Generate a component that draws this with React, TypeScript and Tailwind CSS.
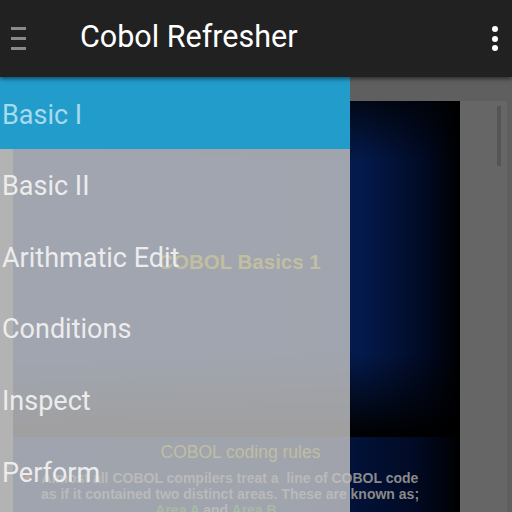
import React from "react";

const items = ["Basic I", "Basic II", "Arithmatic Edit", "Conditions", "Inspect", "Perform"];

export default function App() {
  return (
    <div className="w-[512px] h-[512px] flex flex-col overflow-hidden bg-[#666666]" style={{ fontFamily: "Roboto, 'Noto Sans', sans-serif" }}>
      {/* App bar */}
      <div className="h-[77px] shrink-0 bg-[#212121] flex items-center relative z-20 shadow-[0_2px_4px_rgba(0,0,0,0.5)]">
        <div className="w-[80px] pl-[11px] flex flex-col gap-[7px] self-center">
          <div className="w-[15px] h-[3px] bg-[#8a8a8a]" />
          <div className="w-[15px] h-[3px] bg-[#8a8a8a]" />
          <div className="w-[15px] h-[3px] bg-[#8a8a8a]" />
        </div>
        <div className="text-white text-[30.5px] leading-none flex-1 -mt-[2px]">Cobol Refresher</div>
        <div className="w-[36px] flex flex-col items-center gap-[3.5px] pl-[1px]">
          <div className="w-[6px] h-[6px] rounded-full bg-white" />
          <div className="w-[6px] h-[6px] rounded-full bg-white" />
          <div className="w-[6px] h-[6px] rounded-full bg-white" />
        </div>
      </div>

      {/* Body */}
      <div className="flex-1 relative flex">
        {/* content (dimmed) */}
        <div className="flex-1 pt-[24px] pl-[13px] bg-[#666666]">
          <div className="w-[447px] h-[336px] relative flex items-center justify-center bg-[linear-gradient(180deg,rgba(0,0,0,0.7)_0%,rgba(0,0,0,0)_18%,rgba(0,0,0,0)_75%,rgba(0,0,0,1)_100%),linear-gradient(90deg,#061f58_0%,#041a4c_78%,#010a24_92%,#000000_100%)]">
            <div className="text-[20.5px] font-bold text-[#b09e06] -mt-[14px] ml-[6px]" style={{ fontFamily: "'Liberation Sans', Arial, sans-serif" }}>
              COBOL Basics 1
            </div>
          </div>
          <div className="w-[447px] h-[100px] bg-[linear-gradient(90deg,#031a4e_0%,#02143e_72%,#010a24_90%,#000000_100%)] flex flex-col items-center pt-[5px]" style={{ fontFamily: "'Liberation Sans', Arial, sans-serif" }}>
            <div className="text-[17.5px] leading-[20px] text-[#a89c10] ml-[8px]">COBOL coding rules</div>
            <div className="relative mt-[8px] mr-[13px] text-[14px] leading-[16px] font-bold text-[#8a8a8a] text-center">
              <span className="absolute -left-[16px] top-[5px] w-[6px] h-[6px] rounded-full bg-[#b02020]" />
              <div>Almost all COBOL compilers treat a &nbsp;line of COBOL code</div>
              <div>as if it contained two distinct areas. These are known as;</div>
              <div className="pr-[28px]">
                <span className="text-[#2a8a20]">Area A</span> and <span className="text-[#2a8a20]">Area B</span>
              </div>
            </div>
          </div>
        </div>
        <div className="w-[5px] bg-[#5f5f5f]" />
        {/* top shade strip */}
        <div className="absolute left-0 right-0 top-0 h-[24px] bg-[#5f5f5f]" />
        {/* scrollbar thumb */}
        <div className="absolute left-[497px] top-[29px] w-[4px] h-[60px] bg-[#555555]" />

        {/* Drawer */}
        <div className="absolute left-0 top-0 bottom-0 w-[350px] bg-[#c5c5c5]/[0.81] z-10">
          {items.map((it, i) => (
            <div
              key={it}
              className={
                "h-[71.6px] flex items-center pl-[2px] text-[27px] " +
                (i === 0 ? "bg-[#229ccb] text-[#a6daee]" : "text-[#ececec]")
              }
            >
              <span className="mt-[4px]">{it}</span>
            </div>
          ))}
        </div>
      </div>
    </div>
  );
}
